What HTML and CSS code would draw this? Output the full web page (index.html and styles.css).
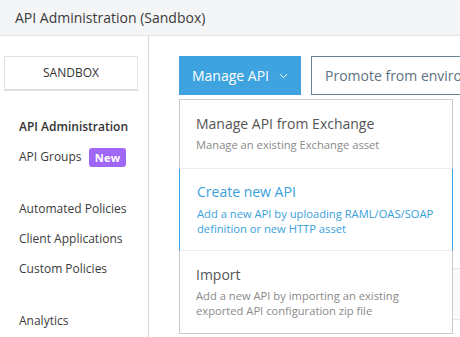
FILE: index.html
```html
<!DOCTYPE html>
<html>
<head>
<meta charset="utf-8">
<link rel="stylesheet" href="styles.css">
</head>
<body>
<div class="header">API Administration (Sandbox)</div>
<div class="layout">
  <aside class="sidebar">
    <div class="env">SANDBOX</div>
    <ul class="nav">
      <li class="active">API Administration</li>
      <li>API Groups <span class="badge">New</span></li>
      <li class="spaced">Automated Policies</li>
      <li>Client Applications</li>
      <li>Custom Policies</li>
      <li class="spaced">Analytics</li>
    </ul>
  </aside>
  <main class="main">
    <div class="actions">
      <div class="manage-wrap">
        <button class="btn-primary">Manage API
          <svg class="chev" width="9" height="6" viewBox="0 0 9 6"><path d="M1 1.2l3.5 3.5 3.5-3.5" fill="none" stroke="#fff" stroke-width="1"/></svg>
        </button>
        <div class="menu">
          <div class="item">
            <div class="item-title">Manage API from Exchange</div>
            <div class="item-sub">Manage an existing Exchange asset</div>
          </div>
          <div class="item selected">
            <div class="item-title">Create new API</div>
            <div class="item-sub">Add a new API by uploading RAML/OAS/SOAP<br>definition or new HTTP asset</div>
          </div>
          <div class="item">
            <div class="item-title">Import</div>
            <div class="item-sub">Add a new API by importing an existing<br>exported API configuration zip file</div>
          </div>
        </div>
      </div>
      <button class="btn-secondary">Promote from environment</button>
    </div>
    <div class="panel"></div>
  </main>
</div>
</body>
</html>
```

FILE: styles.css
```css
* { box-sizing: border-box; }
html, body {
  margin: 0;
  padding: 0;
  width: 460px;
  height: 337px;
  overflow: hidden;
  background: #fff;
  font-family: "Open Sans", "Liberation Sans", sans-serif;
  color: #333;
}
.header {
  height: 36px;
  background: #f4f5f6;
  border-bottom: 1px solid #e3e5e7;
  padding-left: 15px;
  font-size: 14px;
  line-height: 35px;
  color: #3a3a3a;
}
.layout {
  display: flex;
  height: 301px;
}
.sidebar {
  width: 149px;
  flex: none;
  border-right: 1px solid #d9d9d9;
  padding: 20px 10px 0 4px;
}
.env {
  width: 134px;
  height: 35px;
  border: 1px solid #e2e2e2;
  border-bottom: 2px solid #e0e0e0;
  font-size: 12px;
  line-height: 32px;
  text-align: center;
  color: #333;
}
.nav {
  list-style: none;
  margin: 21px 0 0 0;
  padding: 0 0 0 15px;
  font-size: 12px;
}
.nav li {
  height: 30px;
  line-height: 30px;
  color: #3c3c3c;
  white-space: nowrap;
}
.nav li.active { font-weight: 600; color: #333; }
.nav li.spaced { margin-top: 22px; }
.badge {
  display: inline-block;
  margin-left: 4px;
  padding: 0 6px;
  height: 19px;
  line-height: 19px;
  border-radius: 3px;
  background: #a066f5;
  color: #fff;
  font-weight: 700;
  font-size: 11px;
  letter-spacing: 0.3px;
  vertical-align: -1px;
}
.main {
  flex: 1;
  padding: 20px 0 0 30px;
  overflow: hidden;
}
.actions {
  display: flex;
  gap: 10px;
  white-space: nowrap;
}
.manage-wrap { position: relative; }
.btn-primary {
  width: 122px;
  height: 39px;
  border: none;
  background: #3ea3df;
  color: #fff;
  font-family: inherit;
  font-size: 14px;
  padding: 0 0 0 13px;
  text-align: left;
  display: flex;
  align-items: center;
}
.chev { margin-left: 10px; margin-top: 1px; }
.btn-secondary {
  height: 39px;
  flex: none;
  border: 1px solid #6a8596;
  background: #fff;
  color: #5d7181;
  font-family: inherit;
  font-size: 14px;
  padding: 0 13px;
  text-align: left;
}
.menu {
  position: absolute;
  top: 43px;
  left: 0;
  width: 274px;
  background: #fff;
  border: 1px solid #cbcbcb;
  z-index: 5;
}
.item {
  padding: 13px 4px 15px 16px;
  border-bottom: 1px solid #ededed;
  white-space: nowrap;
}
.item:last-child { border-bottom: none; padding-bottom: 14px; }
.item.selected {
  margin: 0 -1px;
  padding: 12px 4px 13px 17px;
  border-left: 1px solid #3aa0dc;
  border-right: 1px solid #3aa0dc;
}
.item-title {
  font-size: 14px;
  line-height: 22px;
  color: #555;
}
.item-sub {
  margin-top: 2px;
  font-size: 11.2px;
  line-height: 15.5px;
  color: #8a8a8a;
}
.selected .item-sub { margin-top: 3px; }
.selected .item-title, .selected .item-sub { color: #3aa0dc; }
.panel {
  margin-top: 173px;
  height: 52px;
  background: #f8f9fa;
  border-top: 1px solid #e4e6e8;
  border-bottom: 1px solid #e4e6e8;
}
```
